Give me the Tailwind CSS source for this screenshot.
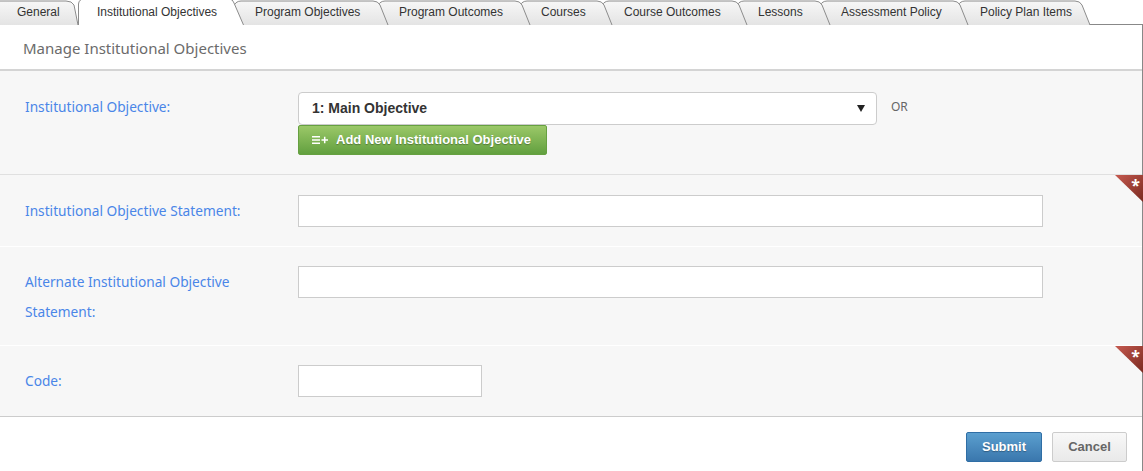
<!DOCTYPE html>
<html lang="en">
<head>
  <meta charset="UTF-8" />
  <title>Manage Institutional Objectives</title>
  <script src="https://cdn.jsdelivr.net/npm/@tailwindcss/browser@4"></script>
</head>
<body class="bg-white h-[471px] w-[1143px] overflow-hidden font-['Liberation_Sans',sans-serif]">

  <!-- Tabs -->
  <nav id="tabs" class="flex h-[25px] relative z-10 text-[12px] leading-[24px] text-[#333]"></nav>

  <!-- Panel -->
  <main class="border-t border-r border-[#888] h-[447px] -mt-px font-['Noto_Sans',sans-serif]">
    <div class="h-[46px] pl-[23px] pt-[2px] flex items-center border-b-2 border-[#d4d4d4] text-[15px] text-[#6b6b6b]">
      Manage Institutional Objectives
    </div>

    <div class="h-[104px] bg-[#f7f7f7] border-b border-[#e0e0e0] flex">
      <label class="w-[298px] pl-[25px] pt-[26px] text-[13.7px] leading-5 text-[#4a86e8]">Institutional Objective:</label>
      <div class="w-[579px] pt-[21px]">
        <div class="relative">
          <select class="appearance-none w-full h-[33px] bg-white border border-[#ccc] rounded-[4px] pl-[13px] text-[14px] font-bold text-[#333] font-['Liberation_Sans',sans-serif]">
            <option>1: Main Objective</option>
          </select>
          <span class="absolute right-[12px] top-[13px] w-0 h-0 border-x-[4px] border-x-transparent border-t-[7px] border-t-[#222]"></span>
        </div>
        <button class="w-[249px] h-[30px] rounded-[2px] border border-[#66a041] bg-gradient-to-b from-[#9bc868] to-[#62a03f] text-white text-[13px] font-bold flex items-center pl-[13px] gap-[8px] font-['Liberation_Sans',sans-serif] [text-shadow:0_1px_1px_rgba(0,0,0,0.3)]">
          <svg width="16" height="8" viewBox="0 0 16 8" fill="none" stroke="white" stroke-width="1.5"><path d="M0 .8h8M0 4h8M0 7.2h8M9.5 4h6.5M12.7 .8v6.4"/></svg>
          Add New Institutional Objective
        </button>
      </div>
      <span class="pl-[14px] pt-[26px] text-[12px] leading-5 text-[#666]">OR</span>
    </div>

    <div class="relative h-[72px] bg-[#f7f7f7] border-b border-white flex">
      <label class="w-[298px] pl-[25px] pt-[26px] text-[13.7px] leading-5 text-[#4a86e8]">Institutional Objective Statement:</label>
      <div class="pt-[20px]"><input class="block w-[745px] h-[32px] bg-white border border-[#ccc]" /></div>
      <div class="absolute top-0 -right-px w-[28px] h-[27px] bg-gradient-to-br from-[#c65a50] to-[#7a2a20] [clip-path:polygon(0_0,100%_0,100%_100%)]"></div>
      <span class="absolute top-[2px] right-[2px] text-[16px] leading-4 font-bold text-white">*</span>
    </div>

    <div class="h-[99px] bg-[#f7f7f7] border-b border-white flex">
      <label class="w-[298px] pl-[25px] pr-[40px] pt-[20px] text-[13.7px] leading-[30px] text-[#4a86e8]">Alternate Institutional Objective Statement:</label>
      <div class="pt-[19px]"><input class="block w-[745px] h-[32px] bg-white border border-[#ccc]" /></div>
    </div>

    <div class="relative h-[71px] bg-[#f7f7f7] border-b border-[#ccc] flex">
      <label class="w-[298px] pl-[25px] pt-[25px] text-[13.7px] leading-5 text-[#4a86e8]">Code:</label>
      <div class="pt-[19px]"><input class="block w-[184px] h-[32px] bg-white border border-[#ccc]" /></div>
      <div class="absolute top-0 -right-px w-[28px] h-[27px] bg-gradient-to-br from-[#c65a50] to-[#7a2a20] [clip-path:polygon(0_0,100%_0,100%_100%)]"></div>
      <span class="absolute top-[2px] right-[2px] text-[16px] leading-4 font-bold text-white">*</span>
    </div>

    <div class="flex justify-end gap-[10px] pt-[15px] pr-[15px] font-['Liberation_Sans',sans-serif] text-[13px] font-bold">
      <button class="w-[76px] h-[30px] rounded-[2px] border border-[#2f6ea5] bg-gradient-to-b from-[#5b9fcf] to-[#3a77ad] text-white [text-shadow:0_1px_1px_rgba(0,0,0,0.3)]">Submit</button>
      <button class="w-[75px] h-[30px] rounded-[2px] border border-[#ccc] bg-gradient-to-b from-[#f8f8f8] to-[#e9e9e9] text-[#666]">Cancel</button>
    </div>
  </main>

  <script>
    // right edge of each tab, measured at the bottom of its slant
    const tabs = [
      { name: 'General', left: 0, right: 78, pad: 17 },
      { name: 'Institutional Objectives', left: 78, right: 244, pad: 19, active: true },
      { name: 'Program Objectives', left: 244, right: 388, pad: 11 },
      { name: 'Program Outcomes', left: 388, right: 530, pad: 11 },
      { name: 'Courses', left: 530, right: 612, pad: 11 },
      { name: 'Course Outcomes', left: 612, right: 747, pad: 12 },
      { name: 'Lessons', left: 747, right: 830, pad: 11 },
      { name: 'Assessment Policy', left: 830, right: 968, pad: 11 },
      { name: 'Policy Plan Items', left: 968, right: 1090, pad: 12 }
    ];

    const nav = document.getElementById('tabs');
    tabs.forEach((tab, i) => {
      const w = tab.right - tab.left;
      const fill = tab.active ? '#fff' : 'url(#tabFill' + i + ')';
      const shape = tab.active
        ? `M0.5 25V4Q1 -1 6 -1H${w - 15}Q${w - 11} -1 ${w - 10} 3L${w - 0.5} 25`
        : i === 0
          ? `M-2 25V1H${w - 12}Q${w - 6} 1 ${w - 4} 5L${w} 25`
          : `M-14 25L-11 8Q-9 1 -3 1H${w - 15}Q${w - 10} 1 ${w - 8} 5L${w} 25`;
      const el = document.createElement('div');
      el.className = 'relative h-[25px] whitespace-nowrap';
      el.style.width = w + 'px';
      el.style.zIndex = tab.active ? 50 : 40 - i;
      el.innerHTML = `
        <svg class="absolute top-0 left-0 overflow-visible" width="${w}" height="25">
          <defs><linearGradient id="tabFill${i}" x1="0" y1="0" x2="0" y2="1">
            <stop offset="0" stop-color="#f7f7f7"/><stop offset="1" stop-color="#e4e4e4"/>
          </linearGradient></defs>
          <path d="${shape}" fill="${fill}" stroke="#8c8c8c" stroke-width="1"/>
        </svg>
        <span class="relative block" style="padding-left:${tab.pad}px">${tab.name}</span>`;
      nav.appendChild(el);
    });
  </script>
</body>
</html>
